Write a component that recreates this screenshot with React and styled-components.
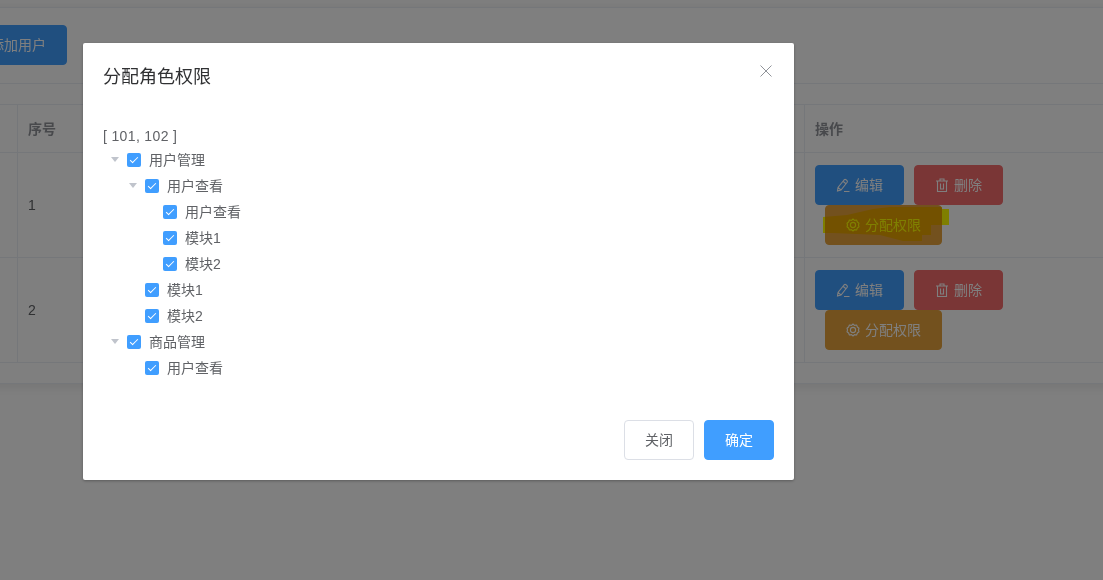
import React from 'react';
import styled, { createGlobalStyle } from 'styled-components';

const GlobalStyle = createGlobalStyle`
  html, body {
    margin: 0;
    height: 100%;
    overflow: hidden;
    background: #fff;
    font-family: "Liberation Sans", "Noto Sans CJK SC", sans-serif;
    font-size: 14px;
    color: #606266;
  }
  * { box-sizing: border-box; }
`;

const Card = styled.div`
  width: 1192px;
  margin: 7px 0 0 -52px;
  background: #fff;
  border: 1px solid #ebeef5;
  box-shadow: 0 2px 12px rgba(0, 0, 0, 0.1);
`;

const Toolbar = styled.div`
  padding: 17px 20px 18px;
  border-bottom: 1px solid #ebeef5;
`;

const Button = styled.button`
  display: inline-flex;
  align-items: center;
  justify-content: center;
  height: 40px;
  padding: 0 20px;
  border: 1px solid ${p => p.$bg || '#dcdfe6'};
  border-radius: 4px;
  background: ${p => p.$bg || '#fff'};
  color: ${p => (p.$bg ? '#fff' : '#606266')};
  font: inherit;
  font-size: 14px;
  line-height: 1;
  white-space: nowrap;
  svg { margin-right: 5px; }
  & + & { margin-left: 10px; }
`;

const TableBox = styled.div`
  margin: 20px 20px 20px;
  border-top: 1px solid #ebeef5;
  border-left: 1px solid #ebeef5;
`;

const Row = styled.div`
  display: grid;
  grid-template-columns: 48px 80px 707px 1fr;
  height: ${p => p.$height}px;
  border-bottom: 1px solid #ebeef5;
`;

const Cell = styled.div`
  display: flex;
  align-items: center;
  padding: ${p => (p.$head ? '10px 10px 12px' : '12px 10px')};
  border-right: 1px solid #ebeef5;
  font-weight: ${p => (p.$head ? 700 : 400)};
  color: ${p => (p.$head ? '#909399' : '#606266')};
`;

const ActionCell = styled(Cell)`
  position: relative;
  flex-wrap: wrap;
  align-content: flex-start;
`;

const Marker = styled.svg`
  position: absolute;
  left: 18px;
  top: 53px;
  mix-blend-mode: multiply;
`;

const Overlay = styled.div`
  position: fixed;
  inset: 0;
  background: rgba(0, 0, 0, 0.5);
`;

const Dialog = styled.div`
  position: relative;
  width: 711px;
  margin: 43px 0 0 83px;
  background: #fff;
  border-radius: 2px;
  box-shadow: 0 1px 3px rgba(0, 0, 0, 0.3);
`;

const DialogHeader = styled.div`
  padding: 22px 20px 8px;
  font-size: 18px;
  line-height: 24px;
  color: #303133;
`;

const CloseIcon = styled.svg`
  position: absolute;
  top: 20px;
  right: 20px;
`;

const DialogBody = styled.div`
  padding: 30px 20px;
`;

const Ids = styled.div`
  height: 20px;
  line-height: 19px;
  letter-spacing: 0.35px;
`;

const Tree = styled.div`
  margin-top: -1px;
`;

const TreeRow = styled.div`
  display: flex;
  align-items: center;
  height: 26px;
  padding-left: ${p => p.$level * 18}px;
`;

const Caret = styled.span`
  width: 24px;
  height: 5px;
  flex: none;
  display: flex;
  justify-content: center;
  &::before {
    content: '';
    display: ${p => (p.$open ? 'block' : 'none')};
    border-top: 5px solid #c0c4cc;
    border-left: 4px solid transparent;
    border-right: 4px solid transparent;
  }
`;

const Check = styled.span`
  position: relative;
  width: 14px;
  height: 14px;
  margin: 2px 8px 0 0;
  flex: none;
  border-radius: 2px;
  background: #409eff;
  &::after {
    content: '';
    position: absolute;
    left: 5px;
    top: 2px;
    width: 3px;
    height: 7px;
    border: 1px solid #fff;
    border-top: 0;
    border-left: 0;
    transform: rotate(45deg);
  }
`;

const DialogFooter = styled.div`
  display: flex;
  justify-content: flex-end;
  padding: 10px 20px 20px;
`;

const nodes = [
  { level: 0, label: '用户管理', open: true },
  { level: 1, label: '用户查看', open: true },
  { level: 2, label: '用户查看' },
  { level: 2, label: '模块1' },
  { level: 2, label: '模块2' },
  { level: 1, label: '模块1' },
  { level: 1, label: '模块2' },
  { level: 0, label: '商品管理', open: true },
  { level: 1, label: '用户查看' },
];

const Icon = ({ children }) => (
  <svg width="14" height="14" viewBox="0 0 14 14" fill="none" stroke="currentColor" strokeWidth="1.1">
    {children}
  </svg>
);

const EditIcon = () => (
  <Icon>
    <path d="M1.5 13L2 9.5 8 2Q9 1 10 1.8L11 2.6Q11.8 3.5 11 4.5L5 12ZM7 3.3L10 5.7M2 9.5L5 12M8 13.5H13.5" />
  </Icon>
);

const TrashIcon = () => (
  <Icon>
    <path d="M1 3H13M5 3V1H9V3M2.5 3V13.5H11.5V3M5.5 5.5V11H8.5V5.5" />
  </Icon>
);

const GearIcon = () => (
  <Icon>
    <path d="M7 1L8.5 2.4 10.6 2 11.4 4 13 5.2 12.5 7 13 8.8 11.4 10 10.6 12 8.5 11.6 7 13 5.5 11.6 3.4 12 2.6 10 1 8.8 1.5 7 1 5.2 2.6 4 3.4 2 5.5 2.4Z" strokeLinejoin="round" />
    <circle cx="7" cy="7" r="2.6" />
  </Icon>
);

function Actions({ marked }) {
  return (
    <ActionCell>
      <Button $bg="#409eff"><EditIcon />编辑</Button>
      <Button $bg="#f56c6c"><TrashIcon />删除</Button>
      <Button $bg="#e6a23c"><GearIcon />分配权限</Button>
      {marked && (
        <Marker width="127" height="36" viewBox="0 0 127 36">
          <polygon
            fill="#ffff00"
            points="0,11 24,9 50,3 67,1 119,1 119,3 126,3 126,19 108,19 108,29 99,29 99,35 80,35 57,29 10,27 0,27"
          />
        </Marker>
      )}
    </ActionCell>
  );
}

export default function App() {
  return (
    <>
      <GlobalStyle />
      <Card>
        <Toolbar>
          <Button $bg="#409eff">添加用户</Button>
        </Toolbar>
        <TableBox>
          <Row $height={48}>
            <Cell $head />
            <Cell $head>序号</Cell>
            <Cell $head />
            <Cell $head>操作</Cell>
          </Row>
          <Row $height={105}>
            <Cell />
            <Cell>1</Cell>
            <Cell />
            <Actions marked />
          </Row>
          <Row $height={105}>
            <Cell />
            <Cell>2</Cell>
            <Cell />
            <Actions />
          </Row>
        </TableBox>
      </Card>
      <Overlay>
        <Dialog>
          <DialogHeader>分配角色权限</DialogHeader>
          <CloseIcon width="16" height="16" viewBox="0 0 16 16">
            <path d="M2.5 2.5l11 11M13.5 2.5l-11 11" stroke="#909399" strokeWidth="1" fill="none" />
          </CloseIcon>
          <DialogBody>
            <Ids>[ 101, 102 ]</Ids>
            <Tree>
              {nodes.map((node, i) => (
                <TreeRow key={i} $level={node.level}>
                  <Caret $open={node.open} />
                  <Check />
                  {node.label}
                </TreeRow>
              ))}
            </Tree>
          </DialogBody>
          <DialogFooter>
            <Button>关闭</Button>
            <Button $bg="#409eff">确定</Button>
          </DialogFooter>
        </Dialog>
      </Overlay>
    </>
  );
}
